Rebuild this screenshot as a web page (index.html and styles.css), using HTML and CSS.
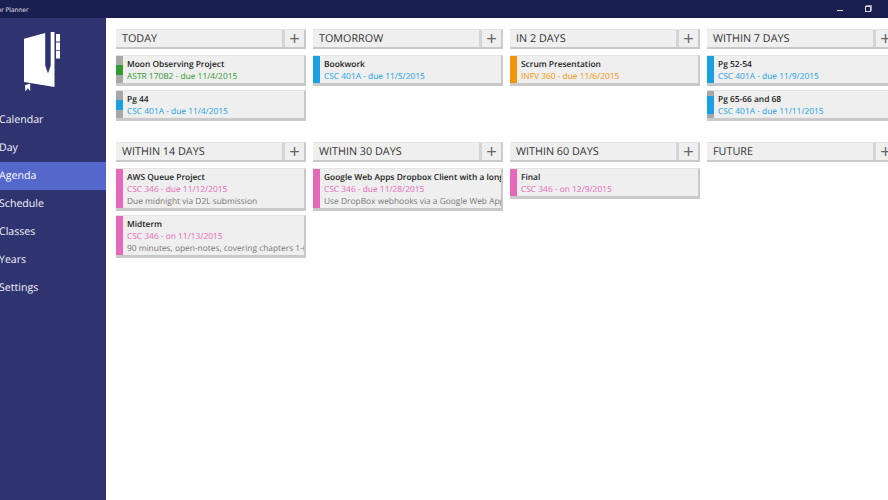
FILE: index.html
```html
<!DOCTYPE html>
<html lang="en">
<head>
  <meta charset="UTF-8" />
  <title>Power Planner</title>
  <link rel="stylesheet" href="styles.css">
</head>
<body>
  <header class="titlebar">
    <span class="app-title">Power Planner</span>
    <div class="window-buttons">
      <span class="win-min"></span>
      <span class="win-restore"></span>
    </div>
  </header>

  <div class="app">
    <aside class="sidebar">
      <div class="logo">
        <svg width="40" height="62" viewBox="24 32 40 62">
          <path fill="#fff" d="M24 38.7 45.2 33V65.5L48 73.5 50.7 65.5V32H54.5V87L24 82Z"/>
          <path fill="#fff" d="M56 34h4v7.6h-4zM56 42.4h4v7.6h-4zM56 50.8h4v7.6h-4z"/>
          <path fill="#fff" d="M25 85.3 30.2 83.6V91L27.6 88.2 25.4 91.4Z"/>
        </svg>
      </div>
      <nav class="nav">
        <a>Calendar</a>
        <a>Day</a>
        <a class="active">Agenda</a>
        <a>Schedule</a>
        <a>Classes</a>
        <a>Years</a>
        <a>Settings</a>
      </nav>
    </aside>

    <main class="agenda">
      <section class="group">
        <div class="group-head"><h2>TODAY</h2><button>+</button></div>
        <div class="card">
          <div class="bar bar-mixed"><i class="fill-green"></i></div>
          <div class="card-text">
            <p class="name">Moon Observing Project</p>
            <p class="sub green">ASTR 170B2 - due 11/4/2015</p>
          </div>
        </div>
        <div class="card">
          <div class="bar bar-mixed"><i class="fill-blue"></i></div>
          <div class="card-text">
            <p class="name">Pg 44</p>
            <p class="sub blue">CSC 401A - due 11/4/2015</p>
          </div>
        </div>
      </section>

      <section class="group">
        <div class="group-head"><h2>TOMORROW</h2><button>+</button></div>
        <div class="card">
          <div class="bar bar-blue"></div>
          <div class="card-text">
            <p class="name">Bookwork</p>
            <p class="sub blue">CSC 401A - due 11/5/2015</p>
          </div>
        </div>
      </section>

      <section class="group">
        <div class="group-head"><h2>IN 2 DAYS</h2><button>+</button></div>
        <div class="card">
          <div class="bar bar-orange"></div>
          <div class="card-text">
            <p class="name">Scrum Presentation</p>
            <p class="sub orange">INFV 360 - due 11/6/2015</p>
          </div>
        </div>
      </section>

      <section class="group">
        <div class="group-head"><h2>WITHIN 7 DAYS</h2><button>+</button></div>
        <div class="card">
          <div class="bar bar-blue"></div>
          <div class="card-text">
            <p class="name">Pg 52-54</p>
            <p class="sub blue">CSC 401A - due 11/9/2015</p>
          </div>
        </div>
        <div class="card">
          <div class="bar bar-mixed"><i class="fill-blue tall"></i></div>
          <div class="card-text">
            <p class="name">Pg 65-66 and 68</p>
            <p class="sub blue">CSC 401A - due 11/11/2015</p>
          </div>
        </div>
      </section>

      <section class="group">
        <div class="group-head"><h2>WITHIN 14 DAYS</h2><button>+</button></div>
        <div class="card">
          <div class="bar bar-pink"></div>
          <div class="card-text">
            <p class="name">AWS Queue Project</p>
            <p class="sub pink">CSC 346 - due 11/12/2015</p>
            <p class="note">Due midnight via D2L submission</p>
          </div>
        </div>
        <div class="card">
          <div class="bar bar-pink"></div>
          <div class="card-text">
            <p class="name">Midterm</p>
            <p class="sub pink">CSC 346 - on 11/13/2015</p>
            <p class="note">90 minutes, open-notes, covering chapters 1-6</p>
          </div>
        </div>
      </section>

      <section class="group">
        <div class="group-head"><h2>WITHIN 30 DAYS</h2><button>+</button></div>
        <div class="card">
          <div class="bar bar-pink"></div>
          <div class="card-text">
            <p class="name">Google Web Apps Dropbox Client with a long name</p>
            <p class="sub pink">CSC 346 - due 11/28/2015</p>
            <p class="note">Use DropBox webhooks via a Google Web App script</p>
          </div>
        </div>
      </section>

      <section class="group">
        <div class="group-head"><h2>WITHIN 60 DAYS</h2><button>+</button></div>
        <div class="card">
          <div class="bar bar-pink"></div>
          <div class="card-text">
            <p class="name">Final</p>
            <p class="sub pink">CSC 346 - on 12/9/2015</p>
          </div>
        </div>
      </section>

      <section class="group">
        <div class="group-head"><h2>FUTURE</h2><button>+</button></div>
      </section>
    </main>
  </div>
</body>
</html>
```

FILE: styles.css
```css
:root {
  --titlebar: #1a1f52;
  --sidebar: #2f3471;
  --active: #5468cc;
  --panel: #efefef;
  --edge: #c9c9c9;
  --blue: #1ba1e2;
  --green: #339933;
  --orange: #f09609;
  --pink: #e668b8;
  --unset: #a8a8a8;
}

* {
  box-sizing: border-box;
}

body {
  margin: 0;
  height: 100vh;
  overflow: hidden;
  background-color: #fff;
  font-family: "Open Sans", "Noto Sans", sans-serif;
  color: #222;
  text-rendering: geometricPrecision;
}

.titlebar {
  display: flex;
  justify-content: space-between;
  align-items: center;
  height: 18px;
  overflow: hidden;
  background-color: var(--titlebar);
  color: #e8e8f0;
  font-size: 6.4px;
}

.app-title {
  margin-left: -15px;
  white-space: nowrap;
}

.window-buttons {
  display: flex;
  align-items: center;
  gap: 22px;
  margin-right: 17px;
}

.win-min {
  width: 6px;
  height: 1px;
  margin-top: 2px;
  background-color: #ddd;
}

.win-restore {
  width: 6px;
  height: 6px;
  border: 1px solid #ddd;
  box-shadow: 1px -1px 0 #999;
}

.app {
  display: flex;
  height: calc(100vh - 18px);
}

.sidebar {
  flex: 0 0 106px;
  background-color: var(--sidebar);
  color: #f2f2f8;
}

.logo {
  height: 88px;
  padding: 14px 0 0 24px;
}

.logo svg {
  display: block;
}

.nav a {
  display: block;
  height: 28px;
  line-height: 29px;
  text-indent: -1px;
  font-size: 10.6px;
}

.nav a.active {
  background-color: var(--active);
  color: #fff;
}

.agenda {
  flex: 1;
  display: grid;
  grid-template-columns: repeat(4, 190px);
  grid-auto-rows: 113px;
  column-gap: 7px;
  padding: 11px 0 0 10px;
  overflow: hidden;
}

.group {
  min-width: 0;
}

.group-head {
  display: flex;
  height: 20px;
  margin-bottom: 6px;
  background-color: var(--panel);
  border-right: 2px solid var(--edge);
  border-bottom: 2px solid var(--edge);
  border-top: 1px solid #e4e4e4;
}

.group-head h2 {
  flex: 1;
  margin: 0;
  padding-left: 6px;
  font-size: 10.8px;
  font-weight: 400;
  line-height: 17px;
  color: #333;
}

.group-head button {
  flex: 0 0 22px;
  padding: 0;
  border: none;
  border-left: 3px solid #d4d4d4;
  background: none;
  color: #666;
  font-family: "Liberation Sans", sans-serif;
  font-size: 18px;
  font-weight: 400;
  line-height: 18px;
}

.card {
  display: flex;
  margin-bottom: 4px;
  background-color: var(--panel);
  border-right: 2px solid var(--edge);
  border-bottom: 3px solid var(--edge);
  border-top: 1px solid #e4e4e4;
}

.bar {
  flex: 0 0 7px;
  display: flex;
  flex-direction: column;
  justify-content: center;
}

.bar-blue { background-color: var(--blue); }
.bar-orange { background-color: var(--orange); }
.bar-pink { background-color: var(--pink); }
.bar-mixed { background-color: var(--unset); }

.bar i {
  display: block;
  height: 10px;
}

.bar i.tall {
  height: 18px;
}

.fill-green { background-color: var(--green); }
.fill-blue { background-color: var(--blue); }

.card-text {
  flex: 1;
  min-width: 0;
  padding: 3px 0 0 4px;
  overflow: hidden;
}

.card-text p {
  margin: 0;
  height: 12px;
  line-height: 12px;
  font-size: 8.4px;
  white-space: nowrap;
  overflow: hidden;
}

.name {
  font-weight: 600;
  color: #222;
}

.note {
  color: #777;
}

.green { color: var(--green); }
.blue { color: var(--blue); }
.orange { color: var(--orange); }
.pink { color: var(--pink); }
```
